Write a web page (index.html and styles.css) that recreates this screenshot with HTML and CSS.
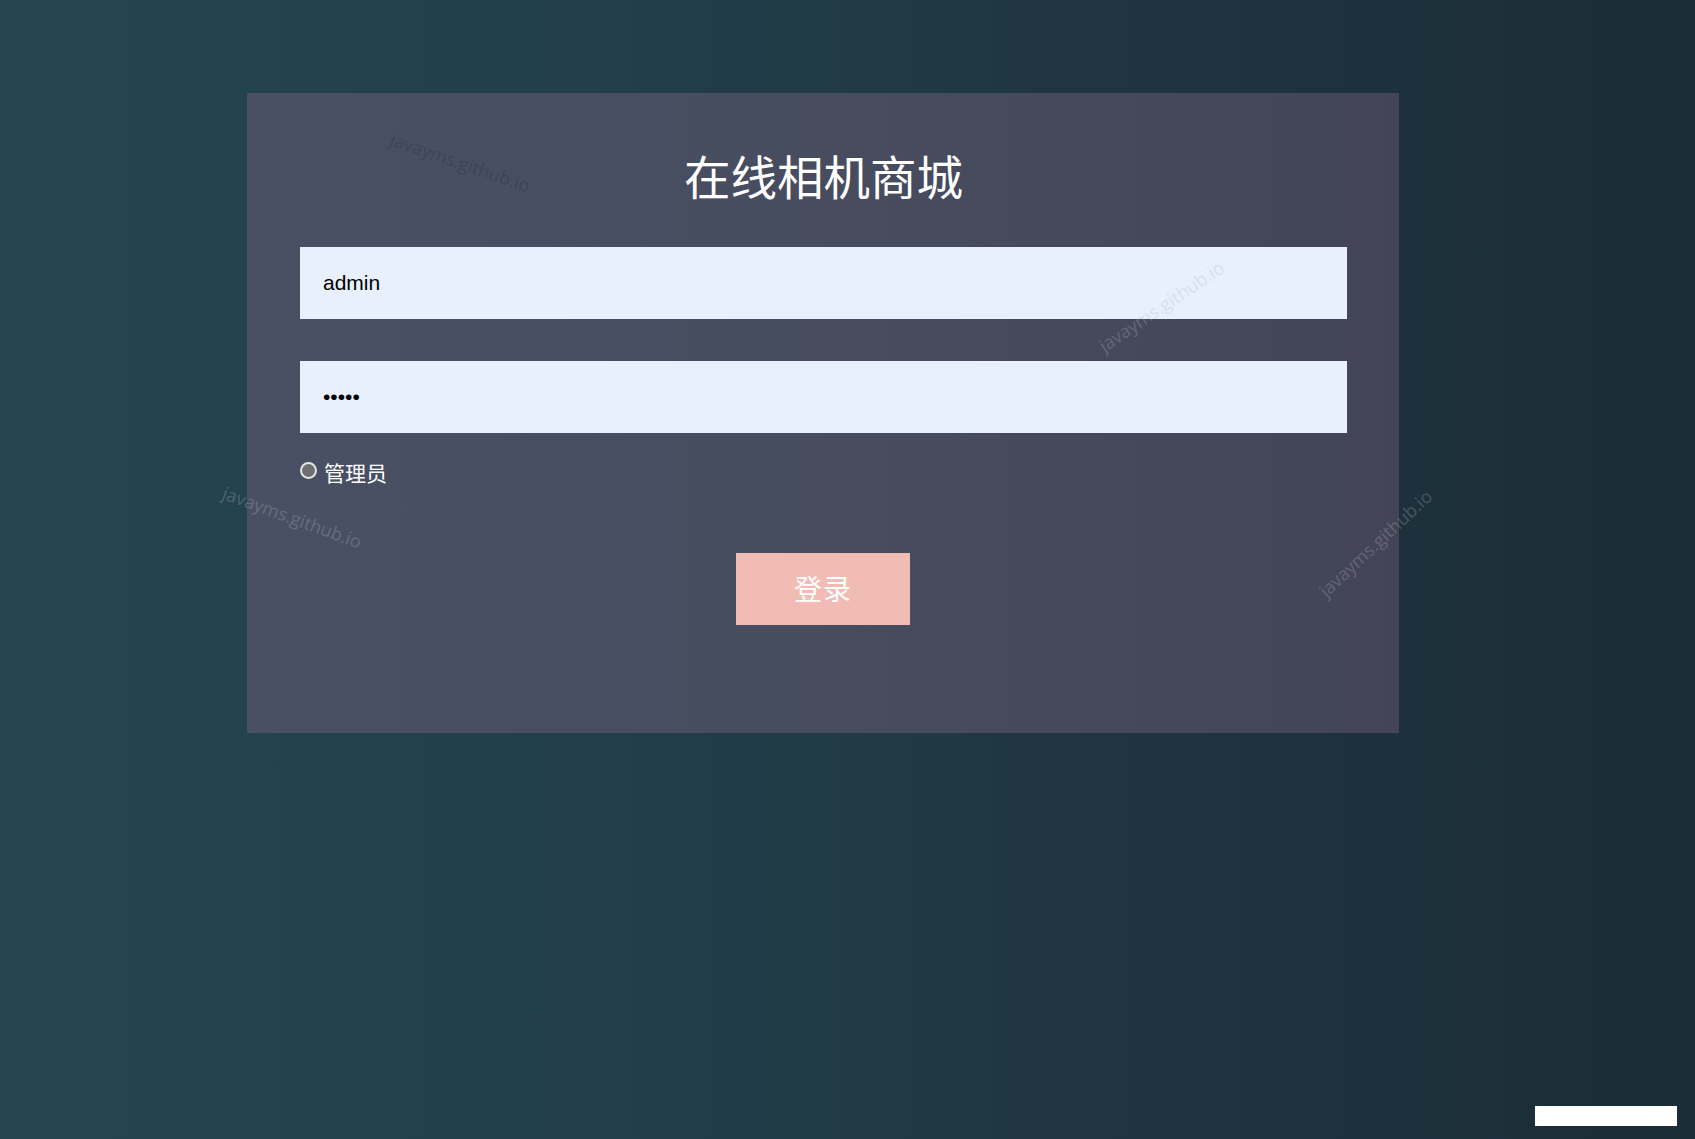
FILE: index.html
```html
<!DOCTYPE html>
<html lang="zh-CN">
<head>
<meta charset="utf-8">
<title>在线相机商城</title>
<link rel="stylesheet" href="styles.css">
</head>
<body>
<div class="page">
  <form class="panel">
    <h1 class="title">在线相机商城</h1>
    <input class="field" type="text" value="admin">
    <input class="field" type="password" value="admin">
    <label class="role"><span class="radio"></span><span class="role-text">管理员</span></label>
    <div class="actions"><button class="login" type="button">登录</button></div>
  </form>
</div>
<div class="wm wm-dark wm1">javayms.github.io</div>
<div class="wm wm2">javayms.github.io</div>
<div class="wm wm3">javayms.github.io</div>
<div class="wm wm4">javayms.github.io</div>
<div class="corner-box"></div>
</body>
</html>
```
FILE: styles.css
```css
html, body {
  margin: 0;
  padding: 0;
  height: 100%;
}
body {
  background: linear-gradient(90deg, #244551 0%, #223f4b 35%, #1f3541 65%, #1b2d37 100%);
  font-family: "Noto Sans CJK SC", "Liberation Sans", sans-serif;
  overflow: hidden;
  position: relative;
  min-height: 1139px;
}
.page {
  padding-top: 93px;
  padding-left: 247px;
}
.panel {
  width: 1152px;
  height: 640px;
  box-sizing: border-box;
  padding: 0 52px 0 53px;
  background: linear-gradient(90deg, #4a5064 0%, #474c5f 50%, #434557 100%);
  display: flex;
  flex-direction: column;
  margin: 0;
}
.title {
  margin: 54px 0 0;
  height: 59px;
  line-height: 56px;
  text-align: center;
  color: #ffffff;
  font-size: 46.5px;
  font-weight: 400;
  font-family: "Noto Sans CJK SC", sans-serif;
}
.field {
  display: block;
  width: 100%;
  height: 72px;
  box-sizing: border-box;
  border: none;
  outline: none;
  background: #e8f0fe;
  padding: 0 23px;
  font-family: "Liberation Sans", Arial, sans-serif;
  font-size: 21px;
  color: #000;
  margin: 41px 0 0;
}
.field + .field {
  margin-top: 42px;
}
.role {
  display: flex;
  align-items: center;
  margin-top: 25px;
  height: 28px;
  color: #ffffff;
}
.radio {
  width: 13px;
  height: 13px;
  border-radius: 50%;
  border: 2px solid #e6e6e6;
  background: #6f6f73;
  margin-right: 7px;
  margin-top: -4px;
}
.role-text {
  font-family: "Noto Sans CJK SC", sans-serif;
  font-size: 21px;
  line-height: 28px;
}
.actions {
  display: flex;
  justify-content: center;
  margin-top: 67px;
  margin-left: -1px;
}
.login {
  width: 174px;
  height: 72px;
  border: none;
  background: #f0bcb4;
  color: #ffffff;
  font-family: "Noto Sans CJK SC", sans-serif;
  font-size: 28px;
  letter-spacing: 1px;
  padding: 0 0 2px;
  cursor: pointer;
}
.wm {
  position: absolute;
  font-family: "Open Sans", "Noto Sans", sans-serif;
  font-size: 18px;
  color: rgba(175, 180, 195, 0.3);
  white-space: nowrap;
  transform-origin: center center;
  pointer-events: none;
}
.wm-dark {
  color: rgba(20, 24, 36, 0.22);
}
.wm1 {
  left: 387px;
  top: 150px;
  transform: rotate(19deg);
}
.wm2 {
  left: 219px;
  top: 505px;
  transform: rotate(20deg);
}
.wm3 {
  left: 1088px;
  top: 294px;
  transform: rotate(-34deg);
}
.wm4 {
  left: 1302px;
  top: 531px;
  transform: rotate(-43deg);
}
.corner-box {
  position: absolute;
  left: 1535px;
  top: 1106px;
  width: 142px;
  height: 20px;
  background: #ffffff;
}
```
